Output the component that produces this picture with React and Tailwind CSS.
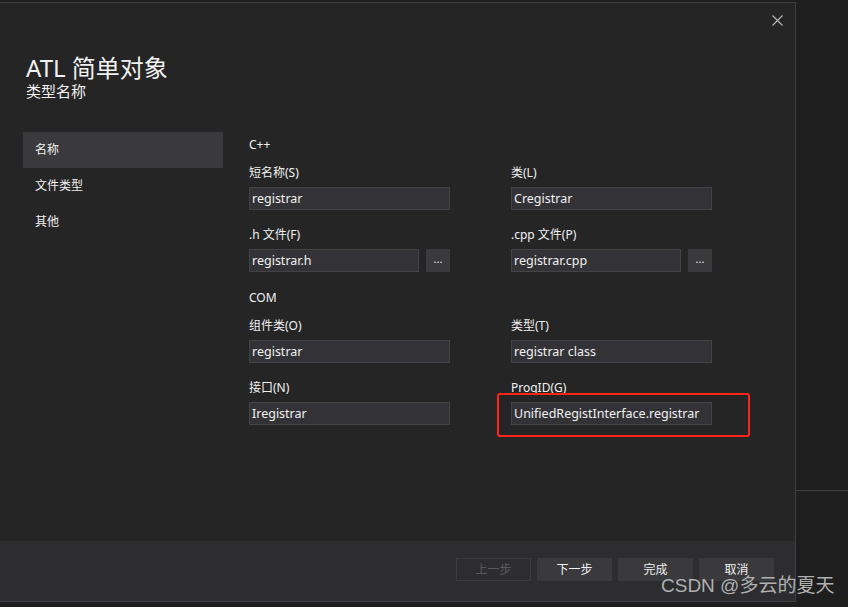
import React from "react";

const FONT = { fontFamily: '"Noto Sans", "Noto Sans CJK SC", sans-serif' };

function Field({ label, value, browse, children }) {
  return (
    <div className="flex flex-col">
      <div className="h-[18px] leading-[18px] text-[12px] text-[#f1f1f1]">{label}</div>
      <div className="mt-[5px] flex items-center gap-[7px]">
        <div className="relative">
          <div
            className={`${browse ? "w-[170px]" : "w-[201px]"} h-[23px] bg-[#333337] border border-[#434346] pl-[2px] text-[12.5px] leading-[21px] text-[#f1f1f1] whitespace-nowrap overflow-hidden`}
          >
            {value}
          </div>
          {children}
        </div>
        {browse && (
          <div className="w-[24px] h-[23px] bg-[#3a3a3d] text-[#f1f1f1] text-[11px] leading-[20px] text-center">
            ...
          </div>
        )}
      </div>
    </div>
  );
}

function Section({ title, children }) {
  return (
    <div className="flex flex-col">
      <div className="h-[20px] leading-[20px] text-[12px] text-[#f1f1f1]">{title}</div>
      <div className="mt-[9px] grid grid-cols-[262px_262px] gap-y-[16px]">{children}</div>
    </div>
  );
}

function Btn({ children, disabled }) {
  return (
    <div
      className={`w-[75px] h-[23px] flex items-center justify-center text-[12px] ${
        disabled ? "border border-[#3c3c3f] text-[#5a5a5a]" : "bg-[#3a3a3d] text-[#f1f1f1]"
      }`}
    >
      {children}
    </div>
  );
}

export default function App() {
  return (
    <div className="relative w-[848px] h-[607px] bg-[#1e1e1e] flex overflow-hidden" style={FONT}>
      <div className="mt-[2px] w-[796px] h-[600px] bg-[#252526] border-t border-r border-b border-[#3f3f46] flex flex-col">
        <div className="relative h-[129px] pl-[26px] pt-[50px]">
          <div className="text-[24px] leading-[29px] text-[#f1f1f1]">ATL 简单对象</div>
          <div className="text-[15px] leading-[18px] text-[#f1f1f1]">类型名称</div>
          <svg className="absolute right-[12px] top-[12px]" width="11" height="11" viewBox="0 0 11 11">
            <path d="M0.5 0.5 L10.5 10.5 M10.5 0.5 L0.5 10.5" stroke="#b8b8b8" strokeWidth="1.1" />
          </svg>
        </div>
        <div className="flex-1 flex pl-[23px]">
          <div className="w-[200px] flex flex-col">
            <div className="h-[36px] bg-[#3a3a3d] pl-[12px] flex items-center text-[12px] text-[#f1f1f1]">名称</div>
            <div className="h-[36px] pl-[12px] flex items-center text-[12px] text-[#f1f1f1]">文件类型</div>
            <div className="h-[36px] pl-[12px] flex items-center text-[12px] text-[#f1f1f1]">其他</div>
          </div>
          <div className="ml-[26px] pt-[3px] flex flex-col gap-[16px]">
            <Section title="C++">
              <Field label="短名称(S)" value="registrar" />
              <Field label="类(L)" value="Cregistrar" />
              <Field label=".h 文件(F)" value="registrar.h" browse />
              <Field label=".cpp 文件(P)" value="registrar.cpp" browse />
            </Section>
            <Section title="COM">
              <Field label="组件类(O)" value="registrar" />
              <Field label="类型(T)" value="registrar class" />
              <Field label="接口(N)" value="Iregistrar" />
              <Field label="ProgID(G)" value="UnifiedRegistInterface.registrar">
                <div className="absolute -left-[14px] -top-[9px] w-[253px] h-[44px] border-2 border-[#ff2418] rounded-[3px]" />
              </Field>
            </Section>
          </div>
        </div>
        <div className="h-[60px] bg-[#2d2d30] flex justify-end items-start pt-[17px] pr-[21px] gap-[6px]">
          <Btn disabled>上一步</Btn>
          <Btn>下一步</Btn>
          <Btn>完成</Btn>
          <Btn>取消</Btn>
        </div>
      </div>
      <div className="flex-1 flex flex-col">
        <div className="h-[491px] border-b border-[#3f3f46]" />
      </div>
      <div
        className="absolute left-[661px] top-[574px] text-[19px] leading-[24px] text-[#b0b0b0] whitespace-nowrap"
        style={{ fontFamily: '"Liberation Sans", "Noto Sans CJK SC", sans-serif' }}
      >
        CSDN @多云的夏天
      </div>
    </div>
  );
}
